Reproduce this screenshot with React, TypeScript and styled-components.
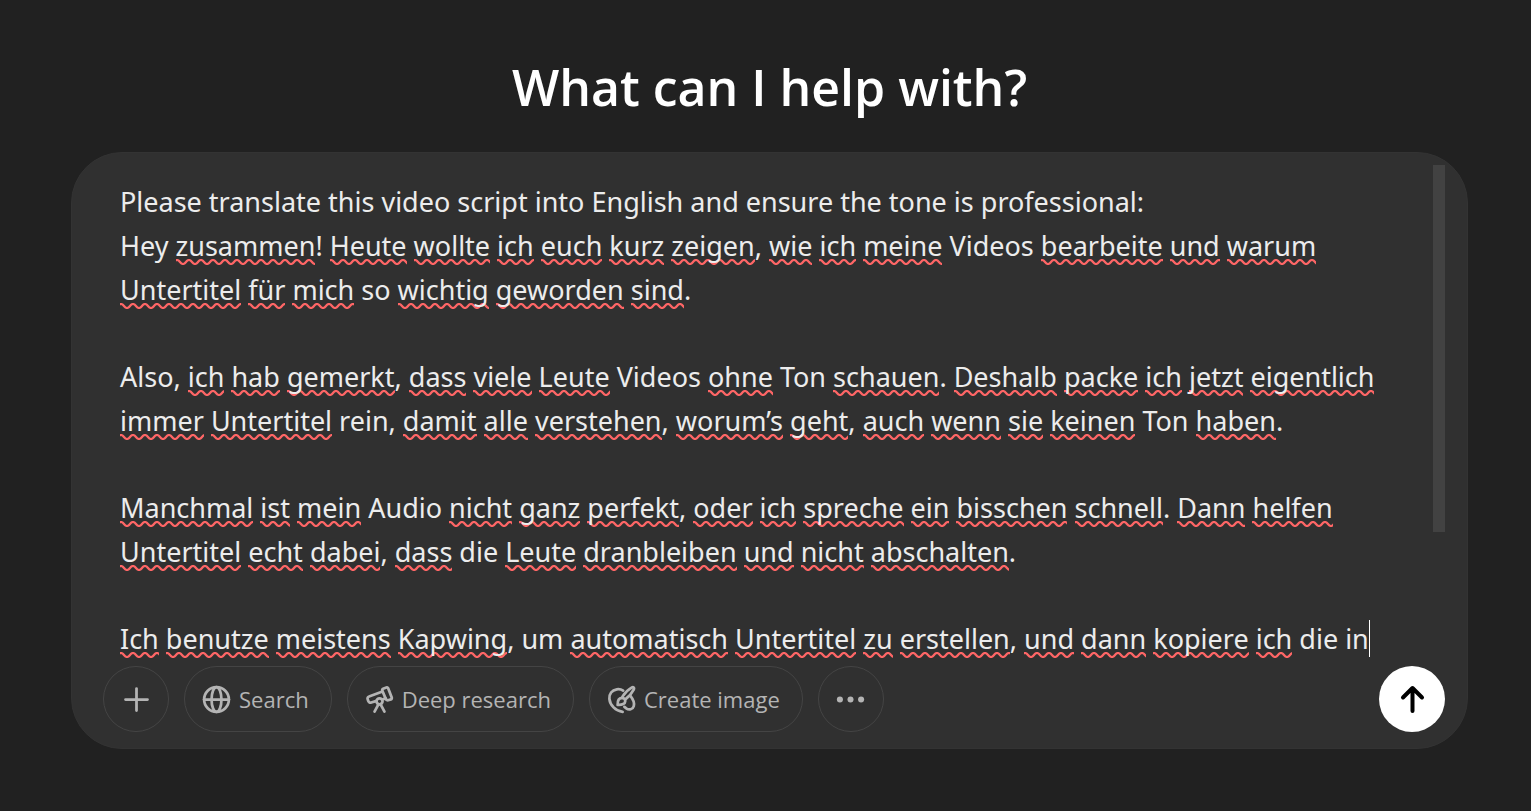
import React from "react";
import styled, { createGlobalStyle } from "styled-components";

const GlobalStyle = createGlobalStyle`
  *, *::before, *::after { box-sizing: border-box; }
  body {
    margin: 0;
    background: #212121;
    color: #ececec;
    font-family: "Segoe UI", "Open Sans", "Noto Sans", sans-serif;
  }
`;

const Page = styled.main`
  display: flex;
  flex-direction: column;
  gap: 31px;
  padding: 53px 63px 63px 71px;
`;

const Title = styled.h1`
  margin: 0;
  color: #fff;
  font-size: 50px;
  font-weight: 600;
  line-height: 68px;
  text-align: center;
`;

const Composer = styled.form`
  display: flex;
  flex-direction: column;
  gap: 5px;
  padding: 12px 22px 16px 31px;
  border: 1px solid #333;
  border-radius: 51px;
  background: #303030;
`;

const ScrollArea = styled.div`
  display: flex;
  justify-content: space-between;
  gap: 16px;
  padding-left: 17px;
`;

const Editor = styled.div`
  flex: 1;
  min-width: 0;
  padding-top: 15px;
  font-family: "Segoe UI", "Noto Sans", "Open Sans", sans-serif;
  font-size: 27px;
  line-height: 44px;
  outline: none;
`;

const Paragraph = styled.p`
  margin: 0;

  & + & {
    margin-top: 43px;
  }
`;

const wave =
  "%3Csvg xmlns='http://www.w3.org/2000/svg' width='12' height='6'%3E%3Cpath d='M-5 5C-2 5 -2 1 1 1S4 5 7 5S10 1 13 1S16 5 19 5' fill='none' stroke='%23ff6666' stroke-width='2.2'/%3E%3C/svg%3E";

const Misspelled = styled.span`
  padding-bottom: 1px;
  background: url("data:image/svg+xml,${wave}") left bottom / 12px 6px repeat-x;
`;

const Caret = styled.span`
  border-left: 1px solid #fff;
`;

const ScrollThumb = styled.div`
  flex: 0 0 74%;
  background: #424242;
`;

const ScrollTrack = styled.div`
  display: flex;
  flex-direction: column;
  width: 12px;
`;

const Toolbar = styled.div`
  display: flex;
  align-items: center;
  gap: 15px;
`;

const Tool = styled.button<{ $round?: boolean }>`
  display: flex;
  align-items: center;
  justify-content: center;
  gap: 6px;
  height: 66px;
  width: ${(p) => (p.$round ? "66px" : "auto")};
  padding: ${(p) => (p.$round ? "0" : "0 22px 0 15px")};
  border: 1px solid #444;
  border-radius: 33px;
  background: transparent;
  color: #b4b4b4;
  font: inherit;
  font-size: 22px;
  line-height: 32px;
  white-space: nowrap;
`;

const Send = styled.button`
  display: flex;
  align-items: center;
  justify-content: center;
  width: 66px;
  height: 66px;
  margin-left: auto;
  padding: 0;
  border: 0;
  border-radius: 50%;
  background: #fff;
  color: #000;
`;

const Icon = styled.svg<{ $weight?: number }>`
  width: 33px;
  height: 33px;
  flex: none;
  fill: none;
  stroke: currentColor;
  stroke-width: ${(p) => p.$weight ?? 2};
  stroke-linecap: round;
  stroke-linejoin: round;
`;

const PlusIcon = () => (
  <Icon viewBox="0 0 24 24" aria-hidden="true">
    <path d="M12 4v16M4 12h16" />
  </Icon>
);

const GlobeIcon = () => (
  <Icon viewBox="0 0 24 24" aria-hidden="true">
    <circle cx="12" cy="12" r="9" />
    <ellipse cx="12" cy="12" rx="3.6" ry="9" />
    <path d="M3 12h18" />
  </Icon>
);

const TelescopeIcon = () => (
  <Icon viewBox="0 0 24 24" aria-hidden="true">
    <path d="M14.6 4.2 17 3.3a1 1 0 0 1 1.3.6l2.6 6.7a1 1 0 0 1-.6 1.3l-1.4.5a2 2 0 0 1-2.5-1.2l-2.4-5.7a1 1 0 0 1 .6-1.3Z" />
    <path d="M14.2 6.2 4.4 9.8a1.6 1.6 0 0 0-1 2.1l.5 1.3a1.6 1.6 0 0 0 2.1 1l3.9-1.2M14 12l2.5-.8" />
    <circle cx="12" cy="13.3" r="2.2" />
    <path d="m11.2 15.5-2.8 5.3M12.8 15.5l2.8 5.3" />
  </Icon>
);

const BrushIcon = () => (
  <Icon viewBox="0 0 24 24" aria-hidden="true">
    <path d="M13.2 5.5C11.8 4.6 10.2 4.4 8.6 4.6 5 5.1 2.9 8 3.2 11.5c.4 4.5 4.5 8.9 9.6 9.5" />
    <path d="M12.7 9.9c1.7-2.7 3.9-5 6.9-6.7.9-.5 1.9.4 1.4 1.4-1.5 2.9-3.6 5.3-6.2 7.3" />
    <path d="M9.2 15.9c-.1-3.3.9-5 3-5.1 1.5 0 2.6 1.1 2.5 2.5-.1 1.8-2 2.8-5.5 2.6Z" />
    <path d="M18.6 9.6c2 2.5 2.9 5.2 2.3 7.3-.6 2.4-3.5 3-5.5 1.5-.5-.4-.9-.7-1.3-1" />
  </Icon>
);

const MoreIcon = () => (
  <Icon viewBox="0 0 24 24" aria-hidden="true">
    <g fill="currentColor" stroke="none">
      <circle cx="4.3" cy="12" r="2.2" />
      <circle cx="12" cy="12" r="2.2" />
      <circle cx="19.7" cy="12" r="2.2" />
    </g>
  </Icon>
);

const ArrowUpIcon = () => (
  <Icon viewBox="0 0 33 33" aria-hidden="true" $weight={4}>
    <path d="M16.5 28V5M7 14.5 16.5 5l9.5 9.5" />
  </Icon>
);

/* Words wrapped in [ ] carry the spell checker's underline. */
const script = [
  [
    "Please translate this video script into English and ensure the tone is professional:",
    "Hey [zusammen]! [Heute] [wollte] [ich] [euch] [kurz] [zeigen], [wie] [ich] [meine] Videos [bearbeite] [und] [warum] [Untertitel] [für] [mich] so [wichtig] [geworden] [sind].",
  ],
  [
    "Also, [ich] [hab] [gemerkt], [dass] [viele] [Leute] Videos [ohne] Ton [schauen]. [Deshalb] [packe] [ich] [jetzt] [eigentlich] [immer] [Untertitel] rein, [damit] [alle] [verstehen], [worum’s] [geht], [auch] [wenn] [sie] [keinen] Ton [haben].",
  ],
  [
    "[Manchmal] [ist] [mein] Audio [nicht] [ganz] [perfekt], [oder] [ich] [spreche] [ein] [bisschen] [schnell]. [Dann] [helfen] [Untertitel] [echt] [dabei], [dass] die [Leute] [dranbleiben] [und] [nicht] [abschalten].",
  ],
  [
    "[Ich] [benutze] [meistens] [Kapwing], um [automatisch] [Untertitel] [zu] [erstellen], [und] [dann] [kopiere] [ich] die in",
  ],
];

const Checked = ({ text }: { text: string }) => (
  <>
    {text
      .split(/(\[[^\]]+\])/)
      .map((part, i) =>
        part.startsWith("[") ? <Misspelled key={i}>{part.slice(1, -1)}</Misspelled> : part
      )}
  </>
);

export default function App() {
  return (
    <Page>
      <GlobalStyle />
      <Title id="prompt-title">What can I help with?</Title>
      <Composer onSubmit={(e) => e.preventDefault()}>
        <ScrollArea>
          <Editor
            role="textbox"
            aria-multiline="true"
            aria-labelledby="prompt-title"
            contentEditable
            suppressContentEditableWarning
            spellCheck={false}
          >
            {script.map((lines, i) => (
              <Paragraph key={i}>
                {lines.map((line, j) => (
                  <React.Fragment key={j}>
                    {j > 0 && <br />}
                    <Checked text={line} />
                  </React.Fragment>
                ))}
                {i === script.length - 1 && <Caret />}
              </Paragraph>
            ))}
          </Editor>
          <ScrollTrack aria-hidden="true">
            <ScrollThumb />
          </ScrollTrack>
        </ScrollArea>
        <Toolbar>
          <Tool type="button" $round aria-label="Add">
            <PlusIcon />
          </Tool>
          <Tool type="button">
            <GlobeIcon />
            Search
          </Tool>
          <Tool type="button">
            <TelescopeIcon />
            Deep research
          </Tool>
          <Tool type="button">
            <BrushIcon />
            Create image
          </Tool>
          <Tool type="button" $round aria-label="More">
            <MoreIcon />
          </Tool>
          <Send type="submit" aria-label="Send">
            <ArrowUpIcon />
          </Send>
        </Toolbar>
      </Composer>
    </Page>
  );
}
